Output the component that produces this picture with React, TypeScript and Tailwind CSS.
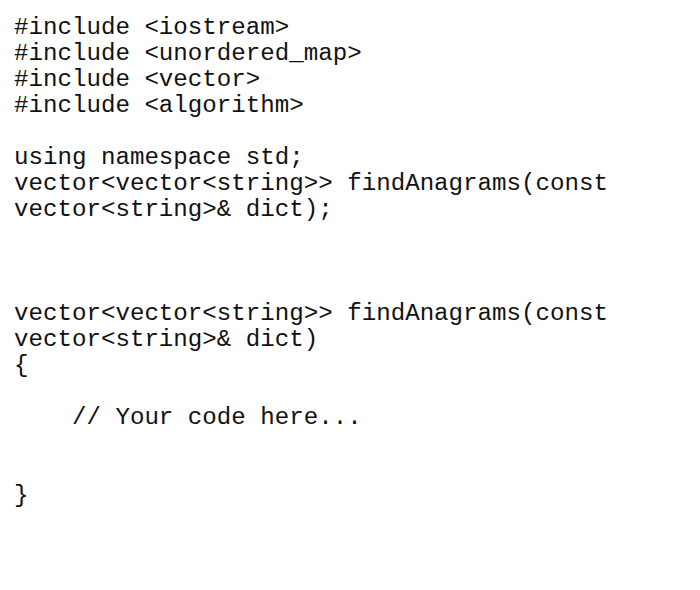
import React from 'react';

const lines = [
  '#include <iostream>',
  '#include <unordered_map>',
  '#include <vector>',
  '#include <algorithm>',
  '',
  'using namespace std;',
  'vector<vector<string>> findAnagrams(const',
  'vector<string>& dict);',
  '',
  '',
  '',
  'vector<vector<string>> findAnagrams(const',
  'vector<string>& dict)',
  '{',
  '',
  '    // Your code here...',
  '',
  '',
  '}',
];

const App = () => {
  return (
    <div className="w-[700px] h-[590px] bg-white overflow-hidden">
      <pre className="pt-[15px] pl-[14px] text-[24.15px] leading-[26px] text-[#111] font-['Liberation_Mono',monospace]">
        {lines.map((line, i) => (
          <div key={i} className="h-[26px]">
            {line}
          </div>
        ))}
      </pre>
    </div>
  );
};

export default App;
